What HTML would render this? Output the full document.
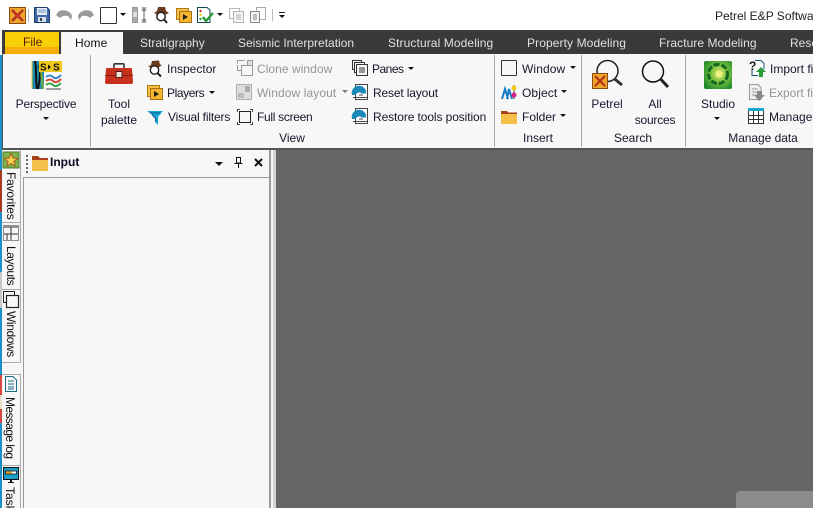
<!DOCTYPE html>
<html><head><meta charset="utf-8">
<style>
html,body{margin:0;padding:0;width:813px;height:508px;overflow:hidden;background:#f7f7f7}
body{position:relative;font-family:"Liberation Sans",sans-serif;font-size:12px;color:#1a1a2a}
.a{position:absolute}
.t{position:absolute;white-space:nowrap;line-height:14px;font-size:12px;color:#16162c}
.g{color:#949494}
.w{color:#e0e0e0;font-size:12px}
.c{transform:translateX(-50%)}
.v{position:absolute;white-space:nowrap;font-size:12px;line-height:14px;transform-origin:0 0;transform:rotate(90deg);color:#111}
svg{position:absolute;overflow:visible}
.arr{position:absolute;width:0;height:0;border-left:3px solid transparent;border-right:3px solid transparent;border-top:3px solid #111}
</style></head><body>
<!-- backgrounds -->
<div class="a" style="left:0;top:0;width:813px;height:30px;background:#fff"></div>
<div class="a" style="left:2px;top:30px;width:811px;height:24px;background:#3a3a3a"></div>
<div class="a" style="left:5px;top:32px;width:54px;height:15px;background:#f8ce06"></div>
<div class="a" style="left:5px;top:47px;width:54px;height:7px;background:#f4ae05"></div>
<div class="a" style="left:61px;top:32px;width:62px;height:22px;background:#f7f7f7"></div>
<div class="a" style="left:3px;top:54px;width:810px;height:94px;background:#f7f7f7"></div>
<div class="a" style="left:2px;top:54px;width:1px;height:94px;background:#555"></div>
<div class="a" style="left:2px;top:148px;width:811px;height:2px;background:#555"></div>
<div class="a" style="left:90px;top:55px;width:1px;height:92px;background:#aaa"></div>
<div class="a" style="left:494px;top:55px;width:1px;height:92px;background:#aaa"></div>
<div class="a" style="left:581px;top:55px;width:1px;height:92px;background:#aaa"></div>
<div class="a" style="left:685px;top:55px;width:1px;height:92px;background:#aaa"></div>
<!-- left desktop sliver -->
<div class="a" style="left:0;top:30px;width:2px;height:25px;background:#f4f4f4"></div>
<div class="a" style="left:0;top:55px;width:2px;height:453px;background:#1e90c8"></div>
<div class="a" style="left:0;top:170px;width:2px;height:42px;background:#a53a20"></div>
<div class="a" style="left:0;top:272px;width:2px;height:36px;background:#c8c8c8"></div>
<div class="a" style="left:0;top:375px;width:2px;height:20px;background:#d8483c"></div>
<div class="a" style="left:0;top:395px;width:2px;height:14px;background:#e8e0c8"></div>
<div class="a" style="left:0;top:409px;width:2px;height:14px;background:#d8483c"></div>
<!-- main -->
<div class="a" style="left:276px;top:150px;width:537px;height:358px;background:#666"></div>
<div class="a" style="left:269px;top:150px;width:2px;height:358px;background:#999"></div>
<div class="a" style="left:273px;top:150px;width:3px;height:358px;background:#d4d4d4"></div>
<div class="a" style="left:736px;top:491px;width:77px;height:17px;background:#8c8c8e;border-top-left-radius:4px"></div>
<div class="a" style="left:23px;top:177px;width:245px;height:331px;border:1px solid #999;border-bottom:0;background:#f7f7f7"></div>

<!-- QAT -->
<svg style="left:9px;top:7px" width="17" height="17"><rect x=".5" y=".5" width="16" height="16" fill="#eda52a" stroke="#8a4a10"/><path d="M3 3L14 14M14 3L3 14" stroke="#b8301c" stroke-width="2.5"/><circle cx="8.5" cy="8.5" r="2.5" fill="#c33"/></svg>
<div class="a" style="left:28px;top:9px;width:1px;height:13px;background:#bbb"></div>
<svg style="left:34px;top:7px" width="16" height="16"><path d="M.5.5H13L15.5 3V15.5H.5Z" fill="#3f6aa8" stroke="#1c3d70"/><rect x="3" y="1" width="10" height="7" fill="#e8eef6"/><path d="M4 3H12M4 5H12" stroke="#7a9ac4"/><rect x="4" y="10" width="8" height="5" fill="#d8dfe8"/><rect x="6" y="11" width="2" height="3" fill="#345"/></svg>
<svg style="left:56px;top:9px" width="16" height="12"><path d="M0 6 L4 9 A7 5 0 0 1 12 7 L15 11 L16 7 A9 7 0 0 0 3 2Z" fill="#9a9a9a"/></svg>
<svg style="left:78px;top:9px" width="16" height="12"><path d="M16 6 L12 9 A7 5 0 0 0 4 7 L1 11 L0 7 A9 7 0 0 1 13 2Z" fill="#9a9a9a"/></svg>
<div class="a" style="left:100px;top:7px;width:15px;height:15px;border:1px solid #333;border-radius:1px"></div>
<div class="arr" style="left:120px;top:13px"></div>
<svg style="left:132px;top:7px" width="17" height="16"><rect x=".5" y=".5" width="5" height="15" fill="#aaa" stroke="#999"/><rect x="1" y="5" width="4" height="5" fill="#ddd"/><path d="M12 1V15M9.5 1H14.5M9.5 15H14.5M10 4L12 2L14 4M10 12L12 14L14 12" stroke="#666" fill="none"/></svg>
<svg style="left:154px;top:6px" width="15" height="17"><path d="M0 7L3 5L4 1L11 1L12 5L15 7L10 9H4Z" fill="#6b3a1c"/><circle cx="7" cy="10.5" r="4.2" fill="#fff" stroke="#222" stroke-width="1.5"/><path d="M10 13.5L13 17" stroke="#222" stroke-width="2"/></svg>
<svg style="left:176px;top:8px" width="16" height="15"><rect x=".5" y=".5" width="12" height="11" fill="#f5c04a" stroke="#b07a10"/><rect x="3.5" y="3.5" width="12" height="11" fill="#f5b52e" stroke="#a87010"/><path d="M7 6L12 9L7 12Z" fill="#222"/></svg>
<svg style="left:197px;top:7px" width="17" height="16"><path d="M.5.5H10L13 3V15.5H.5Z" fill="#fff" stroke="#145"/><circle cx="3.5" cy="4" r="1.2" fill="#d33"/><circle cx="3.5" cy="8" r="1.2" fill="#ec0"/><circle cx="3.5" cy="12" r="1.2" fill="#3a3"/><path d="M6 10L9 14L16 6" stroke="#2a9a3a" stroke-width="2.4" fill="none"/></svg>
<div class="arr" style="left:217px;top:13px"></div>
<svg style="left:229px;top:8px" width="16" height="15" fill="none" stroke="#b5b5b5"><rect x=".5" y=".5" width="10" height="10"/><rect x="4.5" y="3.5" width="10" height="11" fill="#f4f4f4"/><path d="M7 7H12M7 9H12M7 11H12"/></svg>
<svg style="left:250px;top:7px" width="16" height="16" fill="none" stroke="#aaa"><rect x="6.5" y=".5" width="9" height="12"/><rect x=".5" y="4.5" width="9" height="11" fill="#f4f4f4" stroke="#888"/><path d="M3 8H7M3 10H7M3 12H7" stroke="#888"/></svg>
<div class="a" style="left:272px;top:9px;width:1px;height:12px;background:#bbb"></div>
<div class="a" style="left:279px;top:12px;width:6px;height:1px;background:#222"></div>
<div class="arr" style="left:279px;top:15px"></div>
<div class="t" style="left:715px;top:9px;color:#222">Petrel E&amp;P Software</div>

<!-- tabs -->
<div class="t" style="left:23px;top:35px;color:#5a1a08">File</div>
<div class="t" style="left:75px;top:36px;color:#111;letter-spacing:.1px">Home</div>
<div class="t w" style="left:140px;top:36px">Stratigraphy</div>
<div class="t w" style="left:238px;top:36px">Seismic Interpretation</div>
<div class="t w" style="left:388px;top:36px;letter-spacing:.1px">Structural Modeling</div>
<div class="t w" style="left:527px;top:36px;letter-spacing:.1px">Property Modeling</div>
<div class="t w" style="left:659px;top:36px;letter-spacing:.05px">Fracture Modeling</div>
<div class="t w" style="left:790px;top:36px">Reservoir</div>

<!-- Perspective -->
<svg style="left:32px;top:61px" width="30" height="28"><rect x="0" y="0" width="12" height="28" fill="#1a8ab0"/><path d="M0 0V28" stroke="#e8c818" stroke-width="1"/><path d="M3 0C5 8 3 16 5 28M7 4C9 10 8 18 6 28" stroke="#111" stroke-width="2" fill="none"/><path d="M9 10L11 28" stroke="#7ab040" stroke-width="2"/><rect x="7" y="0" width="23" height="11" fill="#f0c818"/><text x="8" y="9.5" font-size="10" font-weight="bold" fill="#111" font-family="Liberation Sans">S</text><path d="M16 3.5L19 6L16 8.5Z" fill="#111"/><text x="21" y="9.5" font-size="10" font-weight="bold" fill="#111" font-family="Liberation Sans">S</text><rect x="14" y="12" width="15" height="16" fill="#fff"/><path d="M14 16Q18 13 21 16T29 14" stroke="#3a8ad0" stroke-width="2" fill="none"/><path d="M14 20Q18 17 21 20T29 18" stroke="#d84a3a" stroke-width="2" fill="none"/><path d="M14 24Q18 21 21 24T29 22" stroke="#3aa84a" stroke-width="2" fill="none"/><path d="M14 28H29" stroke="#444"/></svg>
<div class="t c" style="left:46px;top:97px;letter-spacing:-.18px">Perspective</div>
<div class="arr" style="left:43px;top:117px"></div>

<!-- Toolbox -->
<svg style="left:105px;top:63px" width="28" height="22"><path d="M9 5V1.5Q9 .8 10 .8H18Q19 .8 19 1.5V5" fill="none" stroke="#333" stroke-width="1.6"/><path d="M2 5H26Q27 5 27 6L28 19Q28 21 26 21H2Q0 21 0 19L1 6Q1 5 2 5Z" fill="#c8301c"/><rect x="0" y="12" width="28" height="1" fill="#8a1c10"/><rect x="11" y="8.5" width="6" height="6" fill="#f3e3d0" stroke="#422"/></svg>
<div class="t c" style="left:119px;top:97px">Tool</div>
<div class="t c" style="left:119px;top:113px">palette</div>

<!-- col 1 -->
<svg style="left:148px;top:60px" width="15" height="17"><path d="M0 6.5L3 5L4 1L11 0.5L12 4.5L14 5L10 8H4Z" fill="#6b3a1c"/><circle cx="6.5" cy="10" r="4.2" fill="#fff" stroke="#222" stroke-width="1.4"/><path d="M9.5 13L13 16.5" stroke="#222" stroke-width="2"/></svg>
<div class="t" style="left:167px;top:62px">Inspector</div>
<svg style="left:147px;top:85px" width="16" height="15"><rect x=".5" y=".5" width="12" height="11" fill="#f5c04a" stroke="#b07a10"/><rect x="3.5" y="3.5" width="12" height="11" fill="#f5b52e" stroke="#a87010"/><path d="M7 6L12 9L7 12Z" fill="#222"/></svg>
<div class="t" style="left:167px;top:86px;letter-spacing:-.4px">Players</div>
<div class="arr" style="left:209px;top:91px"></div>
<svg style="left:147px;top:111px" width="16" height="14"><path d="M0 0H16L11 6V14L8 11V6Z" fill="#19a5d8"/><path d="M3 2H13M5 3.5L9 8V11" stroke="#0a5a8a" fill="none"/></svg>
<div class="t" style="left:168px;top:110px;letter-spacing:-.16px">Visual filters</div>

<!-- col 2 -->
<svg style="left:237px;top:60px" width="16" height="16" fill="none" stroke="#999"><path d="M.5 3.5V.5H7.5M.5 5V10.5H4"/><rect x="4.5" y="5.5" width="11" height="10" fill="#f7f7f7"/><rect x="10.5" y=".5" width="5" height="5" fill="#ddd"/></svg>
<div class="t g" style="left:257px;top:62px;letter-spacing:.05px">Clone window</div>
<svg style="left:236px;top:84px" width="16" height="16"><rect x=".5" y=".5" width="15" height="15" fill="#ddd" stroke="#777" stroke-dasharray="1 1"/><rect x="9" y="2" width="5" height="6" fill="#aaa"/><rect x="2" y="9" width="6" height="5" fill="#bbb"/></svg>
<div class="t g" style="left:257px;top:86px;letter-spacing:.1px">Window layout</div>
<div class="arr" style="left:342px;top:90px;border-top-color:#777"></div>
<svg style="left:237px;top:109px" width="16" height="16" fill="none" stroke="#222"><rect x="2.5" y="2.5" width="11" height="11"/><path d="M.5 3V.5H3M13 .5H15.5V3M.5 13V15.5H3M13 15.5H15.5V13" stroke="#444"/></svg>
<div class="t" style="left:257px;top:110px;letter-spacing:-.3px">Full screen</div>

<!-- col 3 -->
<svg style="left:352px;top:60px" width="16" height="16" fill="none" stroke="#333"><rect x=".5" y=".5" width="9" height="9"/><rect x="2.5" y="2.5" width="10" height="10" fill="#f7f7f7"/><rect x="4.5" y="4.5" width="11" height="11" fill="#f7f7f7"/><path d="M7 8H13M7 10H13M7 12H13"/></svg>
<div class="t" style="left:372px;top:62px;letter-spacing:-.5px">Panes</div>
<div class="arr" style="left:408px;top:67px"></div>
<svg style="left:352px;top:84px" width="16" height="16"><rect x="3.5" y=".5" width="12" height="15" fill="#fff" stroke="#444"/><path d="M0 11A7 7 0 0 1 14 7L14 9.5H9.5A3.2 3.2 0 0 0 4 11Z" fill="#1a8ab8"/><path d="M1 13.5H15" stroke="#444"/><path d="M7 11H11" stroke="#444"/></svg>
<div class="t" style="left:373px;top:86px;letter-spacing:-.15px">Reset layout</div>
<svg style="left:352px;top:108px" width="16" height="16"><rect x="3.5" y=".5" width="12" height="15" fill="#fff" stroke="#444"/><path d="M0 11A7 7 0 0 1 14 7L14 9.5H9.5A3.2 3.2 0 0 0 4 11Z" fill="#1a8ab8"/><path d="M1 13.5H15" stroke="#444"/><path d="M7 11H11" stroke="#444"/></svg>
<div class="t" style="left:373px;top:110px;letter-spacing:-.1px">Restore tools position</div>
<div class="t c" style="left:292px;top:131px">View</div>

<!-- Insert -->
<div class="a" style="left:501px;top:60px;width:14px;height:14px;border:1px solid #333;border-radius:1px"></div>
<div class="t" style="left:522px;top:62px;letter-spacing:.1px">Window</div>
<div class="arr" style="left:570px;top:66px"></div>
<svg style="left:501px;top:84px" width="16" height="16"><path d="M1 15L4 5L7 15M6 15L8 5L11 15" stroke="#1a7ac8" stroke-width="2" fill="none"/><path d="M13 1V15" stroke="#333"/><circle cx="13" cy="4" r="2.5" fill="#f0c818"/><circle cx="13" cy="11" r="2.5" fill="#d8208a"/></svg>
<div class="t" style="left:522px;top:86px;letter-spacing:.1px">Object</div>
<div class="arr" style="left:561px;top:90px"></div>
<svg style="left:501px;top:110px" width="16" height="14"><path d="M0 1H6L7 2.5H16V5H0Z" fill="#a8401c"/><rect x="0" y="4" width="16" height="10" fill="#f5c04a"/></svg>
<div class="t" style="left:522px;top:110px">Folder</div>
<div class="arr" style="left:560px;top:114px"></div>
<div class="t c" style="left:538px;top:131px">Insert</div>

<!-- Search -->
<svg style="left:592px;top:60px" width="30" height="30"><circle cx="15.5" cy="11" r="10.5" fill="none" stroke="#222" stroke-width="1.5"/><path d="M22 18.5L30 25" stroke="#333" stroke-width="3"/><rect x=".5" y="13.5" width="15" height="15" fill="#eda52a" stroke="#8a4a10"/><path d="M3 16L13 26M13 16L3 26" stroke="#b8301c" stroke-width="2.2"/></svg>
<div class="t c" style="left:607px;top:97px">Petrel</div>
<svg style="left:640px;top:60px" width="30" height="30"><circle cx="13" cy="11.5" r="10.5" fill="none" stroke="#111" stroke-width="1.5"/><path d="M20.5 19L28 27" stroke="#222" stroke-width="3"/></svg>
<div class="t c" style="left:655px;top:97px">All</div>
<div class="t c" style="left:655px;top:113px;letter-spacing:-.2px">sources</div>
<div class="t c" style="left:633px;top:131px">Search</div>

<!-- Manage -->
<svg style="left:704px;top:61px" width="28" height="28"><defs><radialGradient id="gr" cx=".55" cy=".45" r=".65"><stop offset="0" stop-color="#e8f070"/><stop offset=".45" stop-color="#7cc040"/><stop offset="1" stop-color="#1f8a2a"/></radialGradient></defs><rect width="28" height="28" rx="2" fill="url(#gr)"/><circle cx="14" cy="13" r="9.5" fill="none" stroke="#0f6a20" stroke-width="3" stroke-dasharray="6 2"/><circle cx="15" cy="13" r="3.5" fill="#eef080"/></svg>
<div class="t c" style="left:718px;top:97px">Studio</div>
<div class="arr" style="left:714px;top:117px"></div>
<svg style="left:749px;top:60px" width="17" height="17"><path d="M6 .5H12L15 3.5V9" fill="#fff" stroke="#145a70"/><path d="M3 9V15.5H9" fill="none" stroke="#145a70"/><text x="0" y="10" font-size="12" font-weight="bold" fill="#111" font-family="Liberation Sans">?</text><path d="M12 7L17 12H14V17H10V12H7Z" fill="#2a9a3a"/></svg>
<div class="t" style="left:770px;top:62px">Import file</div>
<svg style="left:749px;top:84px" width="17" height="17"><path d="M.5.5H9L12 3.5V15.5H.5Z" fill="#eee" stroke="#999"/><path d="M3 5H9M3 8H9M3 11H7" stroke="#999"/><path d="M10 17L16 11H13V7H8V11H5Z" fill="#888"/></svg>
<div class="t g" style="left:769px;top:86px">Export file</div>
<svg style="left:748px;top:108px" width="16" height="16"><rect x=".5" y=".5" width="15" height="15" fill="#fff" stroke="#333"/><rect x="0" y="0" width="16" height="3" fill="#19a5c8"/><path d="M5.5 3V16M10.5 3V16M0 7.5H16M0 11.5H16" stroke="#333"/></svg>
<div class="t" style="left:769px;top:110px">Manage</div>
<div class="t c" style="left:763px;top:131px;letter-spacing:-.05px">Manage data</div>

<!-- Panel header -->
<div class="a" style="left:26px;top:155px;width:2px;height:18px;background:repeating-linear-gradient(#666 0 2px,transparent 2px 4px)"></div>
<svg style="left:32px;top:156px" width="17" height="15"><path d="M0 0H6L8 2H16V5H0Z" fill="#a8401c"/><rect x="0" y="4" width="16" height="11" fill="#f5c04a"/></svg>
<div class="t" style="left:50px;top:155px;font-weight:bold;color:#0a0a20">Input</div>
<div class="arr" style="left:215px;top:162px;border-left-width:4px;border-right-width:4px;border-top-width:4px"></div>
<svg style="left:234px;top:157px" width="9" height="11" fill="none" stroke="#111"><path d="M2.5.5H6.5V6H2.5ZM.5 6.5H8.5M4.5 6.5V11"/></svg>
<svg style="left:254px;top:158px" width="9" height="9"><path d="M1 1L8 8M8 1L1 8" stroke="#111" stroke-width="2"/></svg>

<!-- Side tabs -->
<div class="a" style="left:2px;top:150px;width:18px;height:358px;background:#f7f7f7"></div>
<div class="a" style="left:20px;top:150px;width:1px;height:213px;background:#aaa"></div>
<div class="a" style="left:20px;top:374px;width:1px;height:134px;background:#aaa"></div>
<div class="a" style="left:2px;top:222px;width:18px;height:1px;background:#aaa"></div>
<div class="a" style="left:2px;top:289px;width:18px;height:1px;background:#aaa"></div>
<div class="a" style="left:2px;top:362px;width:18px;height:1px;background:#aaa"></div>
<div class="a" style="left:2px;top:374px;width:18px;height:1px;background:#aaa"></div>
<div class="a" style="left:2px;top:465px;width:18px;height:1px;background:#aaa"></div>
<svg style="left:3px;top:152px" width="16" height="16"><rect width="16" height="16" fill="#7fb04a" stroke="#4a7a2a"/><path d="M8 1.5L10 6L14.5 6.5L11 9.5L12 14L8 11.6L4 14L5 9.5L1.5 6.5L6 6Z" fill="#f5d050" stroke="#a85a20"/></svg>
<div class="v" style="left:18px;top:172px;letter-spacing:-.2px">Favorites</div>
<svg style="left:3px;top:225px" width="16" height="16" fill="none" stroke="#222"><rect x=".5" y=".5" width="15" height="15" stroke-dasharray="1 1"/><path d="M1 2H15M8 2V9M1 9H15M8 9V15M4 9V15" stroke="#333"/></svg>
<div class="v" style="left:18px;top:246px;letter-spacing:-.4px">Layouts</div>
<svg style="left:3px;top:291px" width="16" height="17" fill="none" stroke="#222"><rect x=".5" y=".5" width="11" height="11"/><rect x="3.5" y="4.5" width="12" height="12" fill="#f7f7f7" stroke-width="1.2"/></svg>
<div class="v" style="left:18px;top:311px;letter-spacing:-.4px">Windows</div>
<svg style="left:5px;top:376px" width="12" height="16" fill="none" stroke="#1a6a88"><path d="M.5.5H8L11.5 4V15.5H.5Z"/><path d="M3 5H9M3 8H9M3 11H9M3 13H9"/></svg>
<div class="v" style="left:17px;top:397px;letter-spacing:-.6px">Message log</div>
<svg style="left:3px;top:467px" width="16" height="16"><rect x=".5" y=".5" width="15" height="12" fill="#1aa0c8" stroke="#111"/><rect x="2.5" y="4" width="11" height="3" fill="#fff" stroke="#111" stroke-width=".8"/><rect x="3" y="4.5" width="6" height="2" fill="#f0a020"/><rect x="7" y="13" width="2" height="2" fill="#111"/><rect x="5" y="15" width="6" height="1" fill="#111"/></svg>
<div class="v" style="left:17px;top:487px">Tasks</div>
</body></html>
